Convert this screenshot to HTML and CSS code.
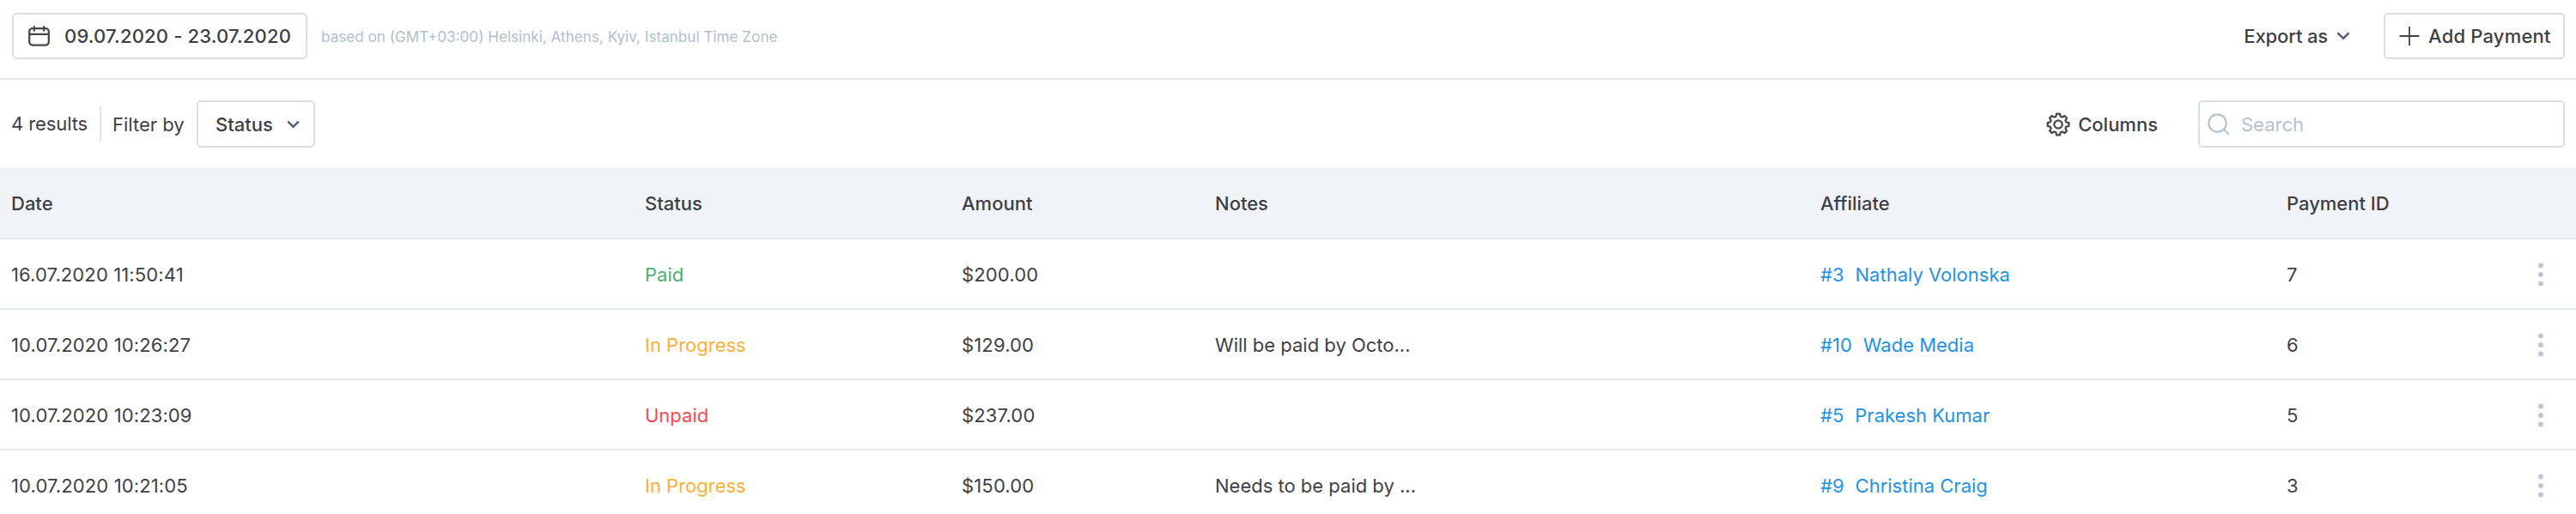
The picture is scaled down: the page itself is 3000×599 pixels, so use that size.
FILE: index.html
```html
<!DOCTYPE html>
<html lang="en">
<head>
  <meta charset="UTF-8">
  <meta name="viewport" content="width=device-width, initial-scale=1.0">
  <title>Payments</title>
  <link rel="stylesheet" href="styles.css">
</head>
<body>
  <div class="topbar">
    <button class="btn date-btn">
      <svg width="25" height="24" viewBox="0 0 25 24" fill="none" stroke="#45464d" stroke-width="2.2" stroke-linecap="round">
        <rect x="1.2" y="3.2" width="22.6" height="19.4" rx="3.5"/>
        <path d="M1.2 9.8h22.6M6.8 1.2v4.6M18.2 1.2v4.6"/>
      </svg>
      <span>09.07.2020 - 23.07.2020</span>
    </button>
    <span class="timezone">based on (GMT+03:00) Helsinki, Athens, Kyiv, Istanbul Time Zone</span>
    <div class="actions">
      <button class="export-btn">
        <span>Export as</span>
        <svg width="16" height="10" viewBox="0 0 16 10" fill="none" stroke="#565e78" stroke-width="2.6">
          <path d="M1.4 1.4L8 7.8l6.6-6.4"/>
        </svg>
      </button>
      <button class="btn add-btn">
        <svg width="24" height="24" viewBox="0 0 24 24" stroke="#45464d" stroke-width="1.8">
          <path d="M12 1v22M0.5 12h23"/>
        </svg>
        <span>Add Payment</span>
      </button>
    </div>
  </div>

  <div class="filters">
    <span class="results">4 results</span>
    <span class="filter-label">Filter by</span>
    <button class="btn status-btn">
      <span>Status</span>
      <svg width="15" height="10" viewBox="0 0 16 10" fill="none" stroke="#565e78" stroke-width="2.8">
        <path d="M1.4 1.4L8 7.8l6.6-6.4"/>
      </svg>
    </button>
    <div class="actions">
      <button class="columns-btn">
        <svg width="28" height="28" viewBox="-14 -14 28 28" fill="none" stroke="#45464d" stroke-width="2.2" stroke-linejoin="round">
          <path d="M12.4 1.9L9.2 2.7L8.4 4.6L10 7.5L7.5 10L4.6 8.4L2.7 9.2L1.9 12.4H-1.9L-2.7 9.2L-4.6 8.4L-7.5 10L-10 7.5L-8.4 4.6L-9.2 2.7L-12.4 1.9V-1.9L-9.2 -2.7L-8.4 -4.6L-10 -7.5L-7.5 -10L-4.6 -8.4L-2.7 -9.2L-1.9 -12.4H1.9L2.7 -9.2L4.6 -8.4L7.5 -10L10 -7.5L8.4 -4.6L9.2 -2.7L12.4 -1.9Z"/>
          <circle r="4.7"/>
        </svg>
        <span>Columns</span>
      </button>
      <label class="search">
        <svg width="26" height="26" viewBox="0 0 26 26" fill="none" stroke="#b4c3d1" stroke-width="2.2">
          <circle cx="11.5" cy="11.5" r="10.2"/>
          <path d="M18.7 18.7l6 6"/>
        </svg>
        <input type="text" placeholder="Search">
      </label>
    </div>
  </div>

  <table class="payments">
    <colgroup>
      <col class="col-date">
      <col class="col-status">
      <col class="col-amount">
      <col class="col-notes">
      <col class="col-affiliate">
      <col class="col-id">
      <col class="col-menu">
    </colgroup>
    <thead>
      <tr>
        <th>Date</th>
        <th>Status</th>
        <th>Amount</th>
        <th>Notes</th>
        <th>Affiliate</th>
        <th>Payment ID</th>
        <th></th>
      </tr>
    </thead>
    <tbody id="payment-list"></tbody>
  </table>

  <script>
    const payments = [
      { date: '16.07.2020 11:50:41', status: 'Paid', amount: '$200.00', notes: '', affiliateId: 3, affiliate: 'Nathaly Volonska', id: 7 },
      { date: '10.07.2020 10:26:27', status: 'In Progress', amount: '$129.00', notes: 'Will be paid by Octo...', affiliateId: 10, affiliate: 'Wade Media', id: 6 },
      { date: '10.07.2020 10:23:09', status: 'Unpaid', amount: '$237.00', notes: '', affiliateId: 5, affiliate: 'Prakesh Kumar', id: 5 },
      { date: '10.07.2020 10:21:05', status: 'In Progress', amount: '$150.00', notes: 'Needs to be paid by ...', affiliateId: 9, affiliate: 'Christina Craig', id: 3 }
    ];

    function renderPayments(payments) {
      const list = document.getElementById('payment-list');
      list.innerHTML = payments.map(payment => `
        <tr>
          <td class="date">${payment.date}</td>
          <td class="${payment.status.toLowerCase().replace(' ', '-')}">${payment.status}</td>
          <td class="amount">${payment.amount}</td>
          <td>${payment.notes}</td>
          <td><a class="affiliate" href="#"><span>#${payment.affiliateId}</span><span>${payment.affiliate}</span></a></td>
          <td>${payment.id}</td>
          <td class="menu">
            <svg width="6" height="28" viewBox="0 0 6 28" fill="#bcc6d6">
              <circle cx="3" cy="3.6" r="3"/>
              <circle cx="3" cy="14" r="3"/>
              <circle cx="3" cy="24.4" r="3"/>
            </svg>
          </td>
        </tr>
      `).join('');
    }

    renderPayments(payments);
  </script>
</body>
</html>
```
FILE: styles.css
```css
* {
  box-sizing: border-box;
}

body {
  margin: 0;
  height: 599px;
  overflow: hidden;
  font-family: Inter, sans-serif;
  font-size: 22px;
  color: #3e3f46;
  background: white;
}

button {
  display: flex;
  align-items: center;
  padding: 0;
  font: inherit;
  font-weight: 500;
  color: inherit;
  background: none;
  border: none;
  white-space: nowrap;
  cursor: pointer;
}

svg {
  display: block;
  flex-shrink: 0;
}

.topbar {
  display: flex;
  align-items: center;
  height: 93px;
  padding: 0 13px 7px 14px;
  border-bottom: 2px solid #e3e8ed;
}

.btn {
  height: 54px;
  border: 2px solid #d8dde9;
  border-radius: 5px;
}

.date-btn {
  width: 344px;
  padding-left: 17px;
  gap: 17px;
  letter-spacing: 0.18px;
}

.timezone {
  margin-left: 16px;
  padding-top: 1px;
  font-size: 17.13px;
  color: #aec0cf;
}

.actions {
  display: flex;
  align-items: center;
  margin-left: auto;
}

.export-btn {
  gap: 10px;
  margin-right: 39px;
  letter-spacing: -0.15px;
}

.add-btn {
  width: 211px;
  padding-left: 16px;
  gap: 10px;
  letter-spacing: 0.2px;
}

.filters {
  display: flex;
  align-items: center;
  height: 102px;
  padding: 1px 13px 0 13px;
}

.results {
  width: 105px;
  line-height: 41px;
  border-right: 2px solid #dfe3ec;
  letter-spacing: -0.1px;
}

.filter-label {
  width: 98px;
  margin-left: 13px;
}

.status-btn {
  width: 138px;
  height: 55px;
  padding-left: 20px;
  gap: 16px;
}

.columns-btn {
  gap: 9px;
  margin-right: 47px;
}

.search {
  display: flex;
  align-items: center;
  width: 427px;
  height: 55px;
  padding-left: 9px;
  gap: 13px;
  border: 2px solid #d8dde9;
  border-radius: 5px;
}

.search input {
  flex: 1;
  padding: 0;
  font: inherit;
  border: none;
  outline: none;
  background: none;
}

.search input::placeholder {
  color: #b0c1d0;
}

.payments {
  width: 100%;
  table-layout: fixed;
  border-collapse: separate;
  border-spacing: 0;
}

.col-date { width: 738px; }
.col-status { width: 369px; }
.col-amount { width: 295px; }
.col-notes { width: 705px; }
.col-affiliate { width: 543px; }
.col-id { width: 268px; }

th {
  height: 84px;
  padding: 2px 13px 0;
  font-weight: 500;
  text-align: left;
  background: #f0f4f7;
  border-bottom: 2px solid #e3e8ed;
}

td {
  height: 82px;
  padding: 2px 13px 0;
  white-space: nowrap;
  border-bottom: 2px solid #e3e8ed;
}

.date { letter-spacing: 0.12px; }
.amount { letter-spacing: 0.15px; }

.paid { color: #4bb173; }
.in-progress { color: #ffae38; }
.unpaid { color: #f84a53; }

.affiliate {
  display: flex;
  gap: 13px;
  color: #2392e6;
  text-decoration: none;
}

.menu svg {
  margin: 0 auto;
}
```
